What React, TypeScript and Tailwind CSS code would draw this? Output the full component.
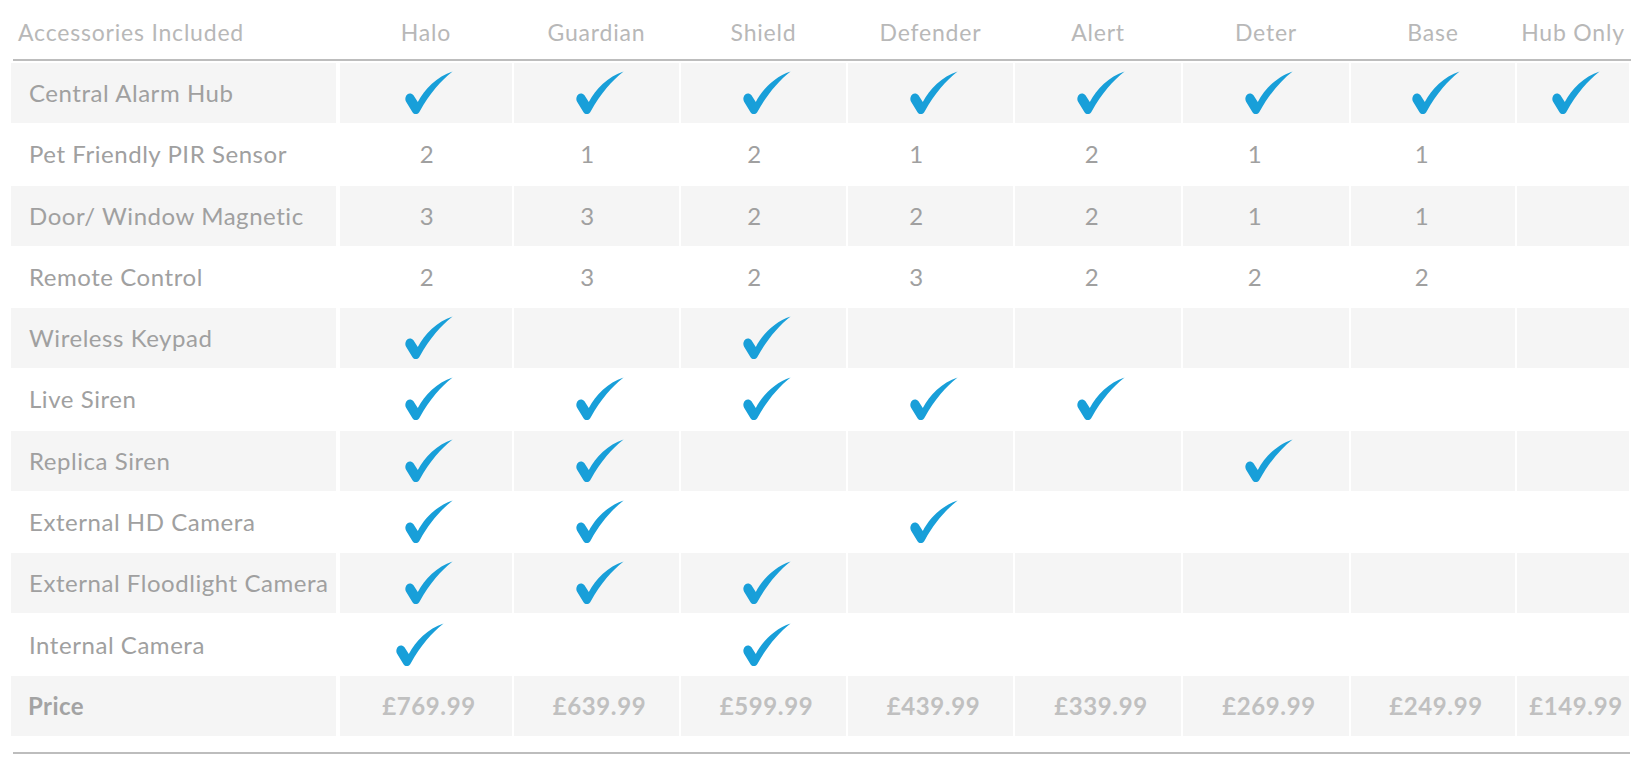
import React from 'react'

const plans = ['Halo', 'Guardian', 'Shield', 'Defender', 'Alert', 'Deter', 'Base', 'Hub Only']

// Y = tick, '' = empty
const rows: { label: string; cells: string[] }[] = [
  { label: 'Central Alarm Hub', cells: ['Y', 'Y', 'Y', 'Y', 'Y', 'Y', 'Y', 'Y'] },
  { label: 'Pet Friendly PIR Sensor', cells: ['2', '1', '2', '1', '2', '1', '1', ''] },
  { label: 'Door/ Window Magnetic', cells: ['3', '3', '2', '2', '2', '1', '1', ''] },
  { label: 'Remote Control', cells: ['2', '3', '2', '3', '2', '2', '2', ''] },
  { label: 'Wireless Keypad', cells: ['Y', '', 'Y', '', '', '', '', ''] },
  { label: 'Live Siren', cells: ['Y', 'Y', 'Y', 'Y', 'Y', '', '', ''] },
  { label: 'Replica Siren', cells: ['Y', 'Y', '', '', '', 'Y', '', ''] },
  { label: 'External HD Camera', cells: ['Y', 'Y', '', 'Y', '', '', '', ''] },
  { label: 'External Floodlight Camera', cells: ['Y', 'Y', 'Y', '', '', '', '', ''] },
  { label: 'Internal Camera', cells: ['Y<', '', 'Y', '', '', '', '', ''] },
]

const prices = ['£769.99', '£639.99', '£599.99', '£439.99', '£339.99', '£269.99', '£249.99', '£149.99']

// numbers sit a little left of centre in most columns
const numShift = [
  'translate-x-[1px]',
  '-translate-x-[9px]',
  '-translate-x-[9px]',
  '-translate-x-[14px]',
  '-translate-x-[6px]',
  '-translate-x-[11px]',
  '-translate-x-[11px]',
  '',
]

const cols = 'grid grid-cols-[327px_172px_165px_165px_165px_166px_166px_164px_112px] gap-x-[2px]'

function Tick({ className = '' }: { className?: string }) {
  return (
    <svg width="48" height="44" viewBox="0 0 48 44" className={className}>
      <path
        d="M0.5 26.4C1.4 22.4 5.8 21.2 8.5 24.2L12.8 31C19.6 18 32 5.4 47.6 0.4C36.2 9.4 24.6 22.4 14.8 40.2C13.2 43.7 9.2 43.9 7.5 41.2L1.1 30.8C0.3 29.4 0.2 27.8 0.5 26.4Z"
        fill="#189fd9"
      />
    </svg>
  )
}

export default function App() {
  return (
    <div className="w-[1642px] h-[769px] bg-white font-['Lato',sans-serif] overflow-hidden">
      <div className="ml-[11px] w-[1618px]">
        {/* header */}
        <div className={`${cols} h-[59px] text-[23px] tracking-[0.8px] text-[#b8b8b8]`}>
          <div className="flex items-center pl-[7px] pt-[6px]">Accessories Included</div>
          {plans.map(p => (
            <div key={p} className="flex items-center justify-center pt-[6px]">{p}</div>
          ))}
        </div>
        <div className="ml-[2px] w-[1618px] h-[2px] bg-[#bdbdbd]" />

        {/* body */}
        <div className={`${cols} mt-[2px] gap-y-[1.3px] text-[24px] tracking-[0.55px] text-[#a0a0a0]`}>
          {rows.map((r, i) => {
            const bg = i % 2 === 0 ? 'bg-[#f5f5f5]' : 'bg-white'
            return (
              <React.Fragment key={r.label}>
                <div className={`h-[60px] mr-[2px] pl-[18px] flex items-center ${bg}`}>{r.label}</div>
                {r.cells.map((c, j) => (
                  <div key={j} className={`h-[60px] flex items-center justify-center ${bg}`}>
                    {c === 'Y' && <Tick className="translate-x-[3px]" />}
                    {c === 'Y<' && <Tick className="-translate-x-[6px]" />}
                    {c !== '' && c[0] !== 'Y' && <span className={numShift[j]}>{c}</span>}
                  </div>
                ))}
              </React.Fragment>
            )
          })}
          <div className="h-[60px] mr-[2px] pl-[17px] flex items-center bg-[#f5f5f5] font-bold tracking-[0.4px] text-[#a3a3a3]">Price</div>
          {prices.map(p => (
            <div key={p} className="h-[60px] flex items-center justify-center bg-[#f5f5f5] font-bold tracking-[0.6px] text-[#c0c0c0]">
              <span className="translate-x-[3px]">{p}</span>
            </div>
          ))}
        </div>

        <div className="mt-[16px] ml-[2px] w-[1617px] h-[2px] bg-[#bdbdbd]" />
      </div>
    </div>
  )
}
